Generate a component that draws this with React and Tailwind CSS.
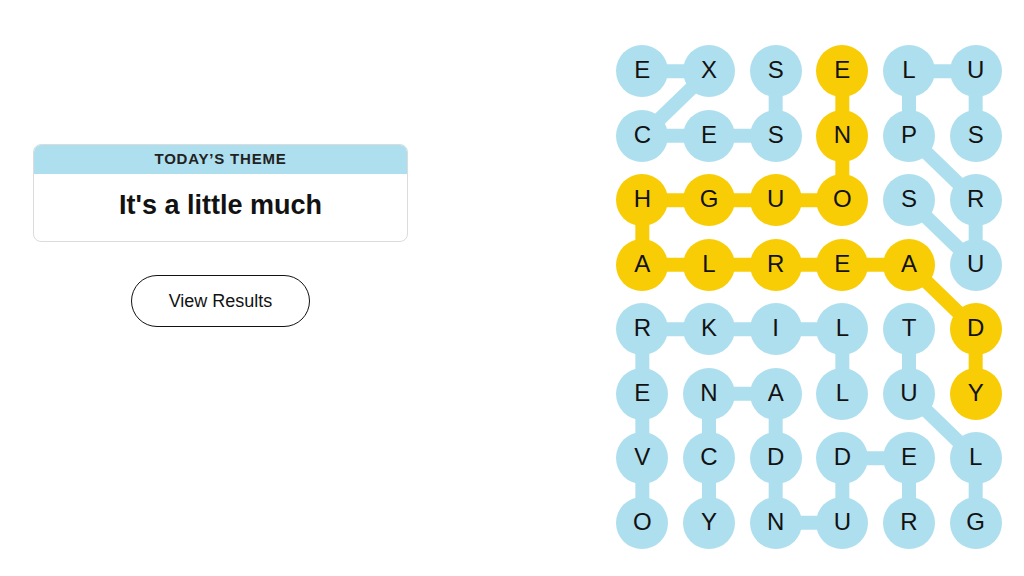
import React from "react";

const LETTERS = [
  "EXSELU",
  "CESNPS",
  "HGUOSR",
  "ALREAU",
  "RKILTD",
  "ENALUY",
  "VCDDEL",
  "OYNURG",
];

const YELLOW = [
  [0, 3], [1, 3], [2, 3], [2, 2], [2, 1], [2, 0], [3, 0], [3, 1], [3, 2], [3, 3], [3, 4], [4, 5], [5, 5],
];

const WORDS = [
  [[0, 0], [0, 1], [1, 0], [1, 1], [1, 2], [0, 2]],
  [[1, 5], [0, 5], [0, 4], [1, 4], [2, 5], [3, 5], [2, 4]],
  [[7, 0], [6, 0], [5, 0], [4, 0], [4, 1], [4, 2], [4, 3], [5, 3]],
  [[7, 4], [6, 4], [6, 3], [7, 3], [7, 2], [6, 2], [5, 2], [5, 1], [6, 1], [7, 1]],
  [[7, 5], [6, 5], [5, 4], [4, 4]],
];

const CW = 400 / 6;
const CH = 516 / 8;
const cx = (c) => CW / 2 + c * CW;
const cy = (r) => CH / 2 + r * CH;

function isYellow(r, c) {
  return YELLOW.some(([a, b]) => a === r && b === c);
}

function Path({ pts, color }) {
  const segs = [];
  for (let i = 0; i < pts.length - 1; i++) {
    const [r1, c1] = pts[i];
    const [r2, c2] = pts[i + 1];
    segs.push(
      <line key={i} x1={cx(c1)} y1={cy(r1)} x2={cx(c2)} y2={cy(r2)} stroke={color} strokeWidth="14" />
    );
  }
  return <g>{segs}</g>;
}

export default function App() {
  return (
    <div
      className="w-[1024px] h-[576px] bg-white flex items-start text-[#121212]"
      style={{ fontFamily: '"Liberation Sans", Arial, sans-serif' }}
    >
      <div className="ml-[33px] mt-[144px] w-[375px] flex flex-col items-center">
        <div className="w-full rounded-[8px] border border-[#dcdcdc] overflow-hidden">
          <div className="h-[29px] bg-[#aedfee] flex items-center justify-center text-[15px] font-bold tracking-[0.8px] text-[#222]">
            TODAY’S THEME
          </div>
          <div className="h-[67px] flex items-center justify-center text-[27px] font-bold pb-[4px]">
            It's a little much
          </div>
        </div>
        <button className="mt-[33px] w-[179px] h-[52px] rounded-full border border-[#121212] text-[18px] flex items-center justify-center bg-white">
          View Results
        </button>
      </div>
      <div className="ml-[201px] mt-[39px] relative w-[400px] h-[516px]">
        <svg className="absolute inset-0" width="400" height="516" viewBox="0 0 400 516">
          {WORDS.map((w, i) => (
            <Path key={i} pts={w} color="#aedfee" />
          ))}
          <Path pts={YELLOW} color="#f8cd05" />
        </svg>
        <div className="relative grid grid-cols-6 grid-rows-8 w-[400px] h-[516px]">
          {LETTERS.map((row, r) =>
            row.split("").map((ch, c) => (
              <div key={r + "-" + c} className="flex items-center justify-center">
                <div
                  className={
                    "w-[52px] h-[52px] rounded-full flex items-center justify-center text-[24px] pb-[2px] " +
                    (isYellow(r, c) ? "bg-[#f8cd05]" : "bg-[#aedfee]")
                  }
                >
                  {ch}
                </div>
              </div>
            ))
          )}
        </div>
      </div>
    </div>
  );
}
